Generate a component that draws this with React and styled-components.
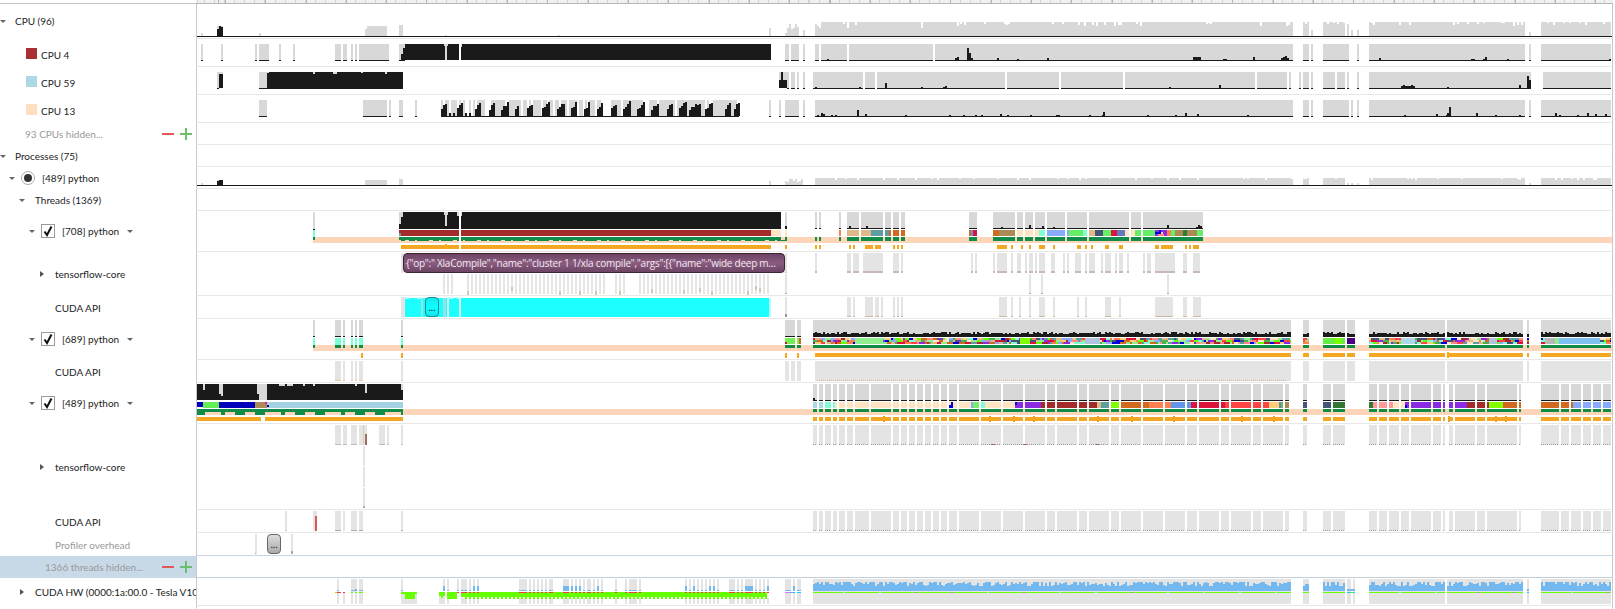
import React from "react";
import styled, { createGlobalStyle } from "styled-components";

const Global = createGlobalStyle`
  html, body { margin: 0; padding: 0; background: #fff; overflow: hidden; }
  #root { width: 1615px; height: 609px; overflow: hidden; }
`;

const GRAY = "#d8d8d8", LIGHT = "#e4e4e4", BLACK = "#1a1a1a", PEACH = "#fdd6b9", GREEN = "#118c48", ORANGE = "#fca912";

let seed = 12345;
const rnd = () => { seed = (seed * 1664525 + 1013904223) % 4294967296; return seed / 4294967296; };

const box = (x, y, w, h, c) => ({ x, y, w, h, c });
const fill = (list, y, h, c) => list.map(([a, b]) => box(a, y, b - a, h, c));
const jag = (list, base, hi, lo, c, chance = 0.35) => {
  const out = [];
  list.forEach(([a, b]) => {
    for (let x = a; x < b; x += 2) {
      const h = rnd() < chance ? lo + Math.floor(rnd() * (hi - lo)) : hi;
      out.push(box(x, base - h, Math.min(2, b - x), h, c));
    }
  });
  return out;
};
const bumps = (list, base) => list.map(([x, h, w = 2]) => box(x, base - h, w, h, BLACK));
const stripes = (list, y, h) => {
  const out = [];
  list.forEach(([a, b]) => {
    out.push(box(a, y, b - a, h, ORANGE));
    for (let x = a + 1; x < b; x += 2) out.push(box(x, y, 1, h, "#e9a633"));
  });
  return out;
};
const colored = (list, y, h) => list.map(([a, b, c]) => box(a, y, b - a, h, c));

const CPU4 = [[201, 203], [221, 223], [255, 257], [259, 269], [279, 281], [293, 295], [335, 341], [343, 347], [351, 353], [355, 357], [359, 389], [399, 405], [785, 789], [791, 799], [803, 805], [815, 819], [821, 847], [849, 933], [935, 1293], [1303, 1309], [1311, 1313], [1323, 1349], [1357, 1359], [1369, 1525], [1529, 1531], [1541, 1611]];
const CPU59 = [[217, 219], [259, 267], [787, 789], [791, 795], [797, 799], [803, 805], [813, 863], [865, 875], [877, 1005], [1007, 1059], [1061, 1123], [1125, 1255], [1257, 1287], [1289, 1291], [1299, 1301], [1303, 1309], [1311, 1313], [1323, 1335], [1337, 1345], [1347, 1349], [1357, 1359], [1369, 1531], [1543, 1611]];
const CPU13 = [[259, 267], [363, 387], [389, 391], [399, 403], [415, 417], [769, 771], [779, 781], [785, 799], [803, 805], [815, 1293], [1303, 1309], [1311, 1313], [1323, 1349], [1351, 1353], [1357, 1359], [1369, 1525], [1529, 1531], [1541, 1611]];

const S489 = [[813, 817], [819, 823], [825, 831], [833, 837], [839, 845], [847, 853], [855, 869], [871, 891], [893, 899], [901, 907], [909, 915], [917, 923], [925, 931], [933, 939], [941, 947], [949, 957], [959, 979], [981, 1001], [1003, 1023], [1025, 1045], [1047, 1055], [1057, 1077], [1079, 1087], [1089, 1109], [1111, 1119], [1121, 1141], [1143, 1163], [1165, 1185], [1187, 1197], [1199, 1219], [1221, 1229], [1231, 1251], [1253, 1261], [1263, 1283], [1285, 1289], [1303, 1307], [1323, 1331], [1333, 1345], [1369, 1377], [1379, 1387], [1389, 1399], [1401, 1409], [1411, 1431], [1433, 1441], [1443, 1445], [1449, 1453], [1455, 1475], [1477, 1485], [1487, 1517], [1519, 1521], [1541, 1559], [1561, 1569], [1571, 1581], [1583, 1591], [1593, 1601], [1603, 1611]];
const S689 = [[813, 1291], [1303, 1309], [1323, 1345], [1347, 1355], [1369, 1445], [1447, 1523], [1527, 1529], [1541, 1611]];
const E689 = [[313, 315], [335, 341], [343, 345], [351, 353], [355, 357], [359, 363], [401, 403]];
const S708 = [[785, 787], [815, 817], [819, 821], [839, 841], [847, 859], [861, 883], [885, 891], [893, 899], [901, 905], [969, 977], [993, 1015], [1017, 1023], [1025, 1033], [1035, 1045], [1047, 1065], [1067, 1087], [1089, 1129], [1131, 1141], [1143, 1203]];
const T708 = [[815, 817], [847, 851], [853, 859], [863, 883], [893, 899], [901, 903], [971, 973], [975, 977], [993, 995], [997, 1007], [1011, 1013], [1017, 1021], [1025, 1027], [1029, 1033], [1035, 1037], [1039, 1045], [1051, 1055], [1063, 1065], [1067, 1069], [1075, 1081], [1085, 1087], [1089, 1095], [1101, 1103], [1105, 1111], [1115, 1117], [1119, 1123], [1127, 1129], [1143, 1145], [1147, 1151], [1155, 1175], [1183, 1187], [1193, 1200]];
const C708 = [[785, 787], [847, 851], [853, 855], [865, 873], [875, 879], [881, 883], [893, 895], [897, 899], [901, 903], [999, 1007], [1011, 1013], [1019, 1021], [1029, 1031], [1039, 1045], [1053, 1055], [1077, 1079], [1085, 1087], [1105, 1111], [1119, 1121], [1155, 1173], [1183, 1187], [1193, 1201]];
const O708 = [[849, 851], [853, 855], [865, 873], [875, 881], [893, 895], [897, 899], [901, 903], [997, 1007], [1011, 1013], [1021, 1023], [1029, 1031], [1039, 1045], [1053, 1055], [1077, 1081], [1085, 1087], [1091, 1093], [1105, 1109], [1119, 1123], [1155, 1159], [1161, 1173], [1185, 1187], [1189, 1191], [1193, 1199]];

const PALETTE = ["#ff4444", "#0000dd", "#66ff00", "#d2691e", "#90ee90", "#ff8888", "#5f9ea0", "#dc143c", "#ffe4c4", "#8a2be2", "#deb887", "#88aaff", "#a52a2a", "#7fffd4", "#4caf50", "#ffcc77", "#445577", "#ff7f50"];
const mixStrip = (ranges, y) => {
  const out = [];
  ranges.forEach(([a, b]) => {
    [y, y + 2, y + 4].forEach((ry) => {
      let x = a;
      while (x < b) {
        const w = Math.min(2 + 2 * Math.floor(rnd() * 3), b - x);
        out.push(box(x, ry, w, 2, PALETTE[Math.floor(rnd() * PALETTE.length)]));
        x += w;
      }
    });
  });
  return out;
};

const comb = () => {
  const blacks = [[441, 447], [457, 463], [475, 481], [489, 495], [501, 509], [515, 519], [527, 533], [542, 549], [557, 564], [571, 577], [584, 590], [597, 603], [611, 617], [623, 630], [637, 645], [651, 659], [667, 673], [679, 686], [689, 701], [705, 712], [725, 730], [734, 739]];
  const out = [];
  for (let x = 441; x < 739; x += 2) {
    if ((x > 603 && x < 611) || rnd() < 0.2) continue;
    out.push(box(x, 100, 2, 16, GRAY));
  }
  blacks.forEach(([a, b]) => {
    for (let x = a; x < b; x += 2) {
      const t = (x - a) / (b - a);
      const top = 100 + Math.floor(rnd() * 3 + (1 - t) * 8);
      out.push(box(x, top, 2, 116 - top, BLACK));
    }
  });
  out.push(...[[449, 451], [453, 455], [465, 467], [469, 471]].map(([a, b]) => box(a, 113, b - a, 3, BLACK)));
  return out;
};

const row1 = [
  ...fill([[201, 203]], 33, 3, GRAY),
  ...fill([[217, 223]], 26, 10, GRAY),
  ...bumps([[217, 7], [219, 10], [221, 9]], 36),
  ...fill([[259, 261]], 33, 3, GRAY),
  ...fill([[365, 367]], 29, 7, GRAY),
  ...fill([[367, 387]], 26, 10, GRAY),
  ...fill([[399, 403]], 25, 11, GRAY),
  ...fill([[445, 447], [558, 560]], 35, 1, GRAY),
  ...fill([[769, 771]], 28, 8, GRAY),
  ...jag([[785, 799]], 36, 12, 3, GRAY, 0.7),
  ...fill([[803, 805]], 30, 6, GRAY),
  ...jag([[815, 821]], 36, 12, 7, GRAY, 0.6),
  ...jag([[821, 960]], 36, 14, 4, GRAY, 0.14),
  ...jag([[960, 1293]], 36, 14, 10, GRAY, 0.14),
  ...jag([[1303, 1309]], 36, 14, 6, GRAY, 0.4),
  ...fill([[1311, 1313]], 30, 6, GRAY),
  ...jag([[1323, 1345]], 36, 14, 11, GRAY, 0.3),
  ...fill([[1347, 1349]], 24, 12, GRAY),
  ...fill([[1351, 1353], [1357, 1359]], 30, 6, GRAY),
  ...jag([[1369, 1525]], 36, 14, 9, GRAY, 0.14),
  ...fill([[1529, 1531]], 32, 4, GRAY),
  ...jag([[1541, 1611]], 36, 14, 11, GRAY, 0.2),
  box(197, 36, 1415, 1, BLACK),
];

const pythonTop = [
  ...fill([[201, 203]], 183, 2, GRAY),
  ...fill([[217, 223]], 180, 5, GRAY),
  ...bumps([[217, 4], [219, 5], [221, 5]], 185),
  ...fill([[365, 387]], 180, 5, GRAY),
  ...fill([[399, 403]], 179, 6, GRAY),
  ...fill([[769, 771]], 181, 4, GRAY),
  ...jag([[785, 803]], 185, 6, 2, GRAY, 0.6),
  ...jag([[815, 1293], [1303, 1309], [1323, 1345], [1369, 1525], [1541, 1611]], 185, 7, 5, GRAY, 0.14),
  ...fill([[1347, 1349], [1351, 1353], [1357, 1359], [1529, 1531]], 183, 2, GRAY),
  box(197, 185, 1415, 1, BLACK),
];

const cpu4 = [
  ...fill(CPU4, 44, 16, GRAY),
  box(405, 44, 366, 16, BLACK),
  box(403, 48, 2, 12, BLACK), box(401, 54, 2, 6, BLACK),
  box(445, 44, 2, 16, GRAY), box(444, 44, 4, 2, GRAY),
  box(459, 44, 2, 16, "#fff"), box(461, 44, 1, 3, GRAY),
  ...bumps([[827, 1], [955, 2], [957, 3], [967, 12], [969, 7], [971, 2], [997, 2], [1017, 1], [1047, 2], [1193, 3, 8], [1223, 1, 4], [1253, 3], [1281, 2, 2], [1283, 3, 2], [1285, 4, 2], [1287, 2, 2], [1379, 2], [1471, 1, 4], [1483, 1, 2], [1485, 3, 2], [1507, 1], [1609, 1]], 60),
  ...fill(CPU4, 60, 1, BLACK),
];

const cpu59 = [
  ...fill(CPU59, 72, 16, GRAY),
  box(267, 72, 136, 16, GRAY),
  ...jag([[267, 403]], 88, 16, 14, BLACK, 0.14),
  box(219, 72, 4, 16, GRAY), box(219, 74, 4, 14, BLACK),
  box(779, 72, 8, 16, BLACK), box(779, 72, 2, 8, GRAY), box(783, 72, 4, 8, GRAY),
  ...bumps([[815, 1], [859, 1], [885, 5], [921, 1], [943, 1], [945, 2], [1169, 1], [1219, 3], [1401, 2, 2], [1403, 3, 2], [1405, 2, 6], [1411, 3, 2], [1413, 2, 2], [1447, 1], [1519, 3], [1527, 12, 2], [1529, 8, 2]], 88),
  ...fill(CPU59, 88, 1, BLACK),
  box(267, 88, 136, 1, BLACK),
];

const cpu13 = [
  ...fill(CPU13, 100, 16, GRAY),
  ...comb(),
  ...bumps([[817, 1], [821, 3], [823, 2], [831, 1], [835, 1], [857, 6], [865, 2], [905, 1], [949, 1], [963, 1], [975, 1], [981, 1], [1000, 2], [1007, 1], [1030, 1], [1056, 1, 4], [1089, 1], [1103, 1], [1102, 1], [1103, 4], [1147, 1], [1175, 1], [1185, 3], [1197, 2], [1247, 1], [1404, 1], [1436, 2], [1446, 1], [1447, 3], [1449, 9], [1476, 3], [1495, 1], [1519, 1], [1555, 3], [1559, 1], [1577, 1], [1587, 3], [1595, 2], [1605, 2]], 116),
  ...fill(CPU13, 116, 1, BLACK),
  ...fill([[441, 739]], 116, 1, BLACK),
];

const strip708 = [
  [839, 841, "#ff7f50"], [847, 859, "#deb887"], [861, 871, "#deb887"], [871, 883, "#5f9ea0"], [885, 889, "#5f9ea0"], [889, 891, "#d2691e"], [893, 899, "#d2691e"], [901, 905, "#d2691e"], [969, 971, "#d2691e"], [971, 973, "#6495ed"], [973, 977, "#dc143c"], [993, 999, "#d2691e"], [999, 1015, "#ab8a55"], [1017, 1023, "#ffe4c4"], [1025, 1033, "#ffe4c4"], [1035, 1039, "#ffe4c4"], [1039, 1045, "#7fffd4"], [1047, 1049, "#88aaff"], [1049, 1065, "#88aaff"], [1067, 1069, "#88aaff"], [1069, 1083, "#66ee66"], [1083, 1087, "#7fffd4"], [1089, 1095, "#deb887"], [1095, 1103, "#445577"], [1103, 1111, "#66ee66"], [1111, 1117, "#dc143c"], [1117, 1125, "#6677bb"], [1125, 1129, "#ffe4c4"], [1131, 1135, "#ffe4c4"], [1135, 1141, "#66ee66"], [1143, 1155, "#66ee66"], [1155, 1167, "#8a2be2"], [1167, 1171, "#ff7f50"], [1171, 1175, "#66ee66"], [1175, 1183, "#ab8a55"], [1183, 1187, "#2e7d32"], [1187, 1197, "#ab8a55"], [1197, 1203, "#66ee66"],
];

const row708 = [
  box(313, 237, 1299, 6, PEACH),
  box(313, 212, 2, 17, GRAY), box(313, 229, 2, 1, BLACK), box(313, 230, 2, 7, "#7fffd4"), box(313, 237, 2, 3, GREEN),
  box(399, 212, 382, 17, BLACK), box(399, 212, 2, 12, GRAY), box(401, 212, 2, 5, GRAY),
  ...fill([[445, 447]], 212, 14, GRAY), box(444, 212, 4, 3, GRAY),
  box(459, 212, 2, 31, "#fff"), box(457, 212, 2, 4, GRAY), box(461, 212, 1, 4, GRAY),
  box(399, 230, 372, 6, "#a52a2a"), box(771, 230, 10, 6, "#ffe4c4"), box(459, 230, 2, 6, "#fff"), box(399, 233, 2, 3, "#5f9ea0"),
  box(399, 237, 382, 3, GREEN),
  ...Array.from({ length: 48 }, (_, i) => box(401 + i * 8, 240, 4 + (i % 3) * 2, 1, GREEN)),
  box(459, 237, 2, 6, "#fff"),
  ...stripes([[401, 459], [461, 771]], 245, 4), box(445, 244, 2, 5, ORANGE),
  box(785, 212, 2, 17, GRAY), box(785, 226, 2, 3, BLACK), box(785, 230, 2, 7, "#ffe4c4"),
  ...fill(S708.slice(1), 212, 16, GRAY),
  ...fill(S708, 237, 4, GREEN),
  ...fill(S708.slice(1), 228, 1, BLACK),
  ...bumps([[849, 2], [866, 2], [1001, 1, 2], [1029, 3], [1042, 2], [1053, 1], [1167, 3], [1196, 1], [1198, 3, 2], [1200, 2]], 228),
  ...colored(strip708, 230, 6),
  box(1155, 232, 6, 2, "#0000dd"), box(1159, 230, 2, 3, "#0000dd"), box(1158, 234, 6, 2, "#ff8888"), box(1161, 232, 2, 2, "#ffcc77"),
  ...stripes([[785, 787], [815, 817], [819, 821]], 245, 4),
  ...stripes(O708, 245, 4),
];

const thinBars = () => {
  const out = [];
  for (let x = 443; x < 770; x += 4) {
    if ((x > 451 && x < 467) || (x > 604 && x < 615) || (x > 626 && x < 636)) continue;
    out.push(box(x, 274, 2, 20, "#e6e6e6"));
    if (rnd() < 0.22) out.push(box(x, 291 - Math.floor(rnd() * 6), 2, 4, "#d0c8b4"));
    else out.push(box(x, 293, 2, 1, "#eadfc8"));
  }
  return out;
};

const tf708 = [
  box(401, 253, 2, 20, LIGHT),
  ...fill(T708, 253, 20, LIGHT),
  ...fill([[785, 787]], 253, 20, LIGHT),
  ...fill(T708, 271, 2, "#c8b8bc"),
  ...fill([[785, 787]], 272, 1, "#f3b6c0"),
  ...thinBars(),
  ...fill([[785, 787], [1029, 1031], [1041, 1043], [1167, 1169]], 274, 20, LIGHT),
  ...fill([[785, 787], [1029, 1031], [1041, 1043], [1167, 1169]], 293, 1, "#aaa"),
];

const cuda708 = [
  box(401, 297, 4, 20, LIGHT),
  box(405, 298, 364, 19, "#1dffff"),
  box(769, 298, 2, 19, "#b4ffff"),
  ...fill([[421, 423], [443, 446]], 298, 19, "#8de6e6"),
  ...fill([[447, 449]], 298, 19, "#e0fafa"),
  ...fill([[459, 461]], 297, 20, "#d6ffff"),
  ...fill([[405, 409], [417, 421], [447, 453], [457, 459]], 297, 2, "#bdffff"),
  ...fill(C708, 297, 20, LIGHT),
  ...fill(C708, 316, 1, "#c9b89c"),
  box(785, 314, 2, 3, "#999"),
];

const solid489 = [
  [813, 817, "#add8e6"], [819, 823, "#add8e6"], [825, 831, "#7fffd4"], [833, 835, "#7fffd4"], [835, 837, "#ffe4c4"], [839, 845, "#ffe4c4"], [847, 853, "#ffe4c4"], [855, 869, "#ffe4c4"], [871, 891, "#ffe4c4"], [893, 899, "#ffe4c4"], [901, 907, "#ffe4c4"], [909, 915, "#ffe4c4"], [917, 923, "#ffe4c4"], [925, 931, "#ffe4c4"], [933, 939, "#ffe4c4"], [941, 947, "#ffe4c4"], [949, 957, "#ffe4c4"], [959, 971, "#ffe4c4"], [971, 973, "#88aaff"], [973, 979, "#77ee66"], [981, 985, "#7fffd4"], [985, 1001, "#ffe4c4"], [1003, 1015, "#ffe4c4"], [1015, 1023, "#8a2be2"], [1025, 1041, "#8a2be2"], [1041, 1045, "#a52a2a"], [1047, 1055, "#a52a2a"], [1057, 1077, "#a52a2a"], [1079, 1087, "#a52a2a"], [1089, 1097, "#a52a2a"], [1097, 1101, "#deb887"], [1101, 1109, "#5f9ea0"], [1111, 1119, "#7fff00"], [1121, 1141, "#d2691e"], [1143, 1149, "#d2691e"], [1149, 1163, "#ff7f50"], [1165, 1171, "#ff7f50"], [1171, 1185, "#6495ed"], [1187, 1191, "#6495ed"], [1191, 1197, "#dc143c"], [1199, 1219, "#dc143c"], [1221, 1225, "#dc143c"], [1225, 1229, "#ff4444"], [1231, 1251, "#ff4444"], [1253, 1261, "#ff4444"], [1263, 1269, "#ff4444"], [1269, 1279, "#ffcc77"], [1279, 1281, "#6688aa"], [1281, 1283, "#66bb66"], [1285, 1289, "#ab8a55"], [1303, 1307, "#445577"], [1323, 1331, "#445577"], [1333, 1345, "#337733"], [1369, 1373, "#337733"], [1373, 1377, "#ff9999"], [1379, 1387, "#ff9999"], [1389, 1393, "#ff9999"], [1393, 1399, "#ffe4c4"], [1401, 1405, "#ffe4c4"], [1405, 1409, "#8a2be2"], [1411, 1431, "#8a2be2"], [1433, 1441, "#8a2be2"], [1443, 1445, "#8a2be2"], [1449, 1453, "#8a2be2"], [1455, 1467, "#8a2be2"], [1467, 1475, "#a52a2a"], [1477, 1485, "#a52a2a"], [1487, 1489, "#a52a2a"], [1489, 1503, "#7fff00"], [1503, 1517, "#d2691e"], [1519, 1521, "#d2691e"], [1541, 1559, "#d2691e"], [1561, 1569, "#d2691e"], [1571, 1573, "#d2691e"], [1573, 1581, "#88aaff"], [1583, 1591, "#88aaff"], [1593, 1601, "#88aaff"], [1603, 1611, "#88aaff"],
];

const row489 = [
  box(197, 409, 1415, 6, PEACH),
  box(197, 384, 206, 16, BLACK),
  box(203, 384, 2, 6, GRAY), box(219, 384, 4, 10, GRAY), box(221, 384, 2, 12, GRAY),
  box(259, 384, 8, 16, GRAY), box(257, 384, 2, 10, GRAY),
  ...fill([[279, 285], [287, 293], [303, 305], [313, 315], [355, 357], [365, 367]], 384, 2, GRAY),
  box(365, 384, 2, 9, GRAY), box(401, 384, 2, 6, GRAY),
  box(197, 402, 6, 5, "#0000bb"), box(203, 402, 16, 6, "#66ee55"), box(219, 402, 36, 6, "#0000bb"),
  box(255, 402, 12, 6, "#ab8a55"), box(267, 402, 136, 6, "#a5d2e3"), box(265, 402, 2, 2, "#ff00aa"), box(267, 405, 2, 2, "#0000bb"),
  box(197, 409, 206, 6, GREEN),
  ...Array.from({ length: 10 }, (_, i) => box(205 + i * 20, 412, i % 3 === 0 ? 16 : 10, 3, PEACH)),
  ...stripes([[197, 261], [265, 403]], 417, 4),
  ...fill(S489, 384, 16, GRAY),
  ...fill(S489, 400, 1, BLACK),
  box(813, 398, 2, 2, BLACK),
  ...colored(solid489, 402, 6),
  box(949, 405, 4, 3, "#0000dd"), box(951, 402, 2, 3, "#0000dd"), box(1015, 402, 2, 3, "#0000dd"), box(1405, 405, 2, 3, "#0000dd"),
  ...fill(S489, 409, 3, GREEN),
  ...stripes(S489, 417, 4),
  ...fill([[883, 885], [989, 991], [1013, 1015], [1033, 1035], [1097, 1099], [1131, 1133], [1173, 1175], [1241, 1243], [1273, 1275], [1448, 1450], [1495, 1497], [1505, 1507]], 416, 6, "#f0a22a"),
];

const row689 = [
  box(313, 345, 1299, 6, PEACH),
  ...fill(E689, 320, 16, GRAY),
  ...fill(E689, 336, 1, BLACK),
  ...fill(E689, 338, 7, "#7fffd4"),
  ...fill(E689, 345, 3, GREEN),
  ...stripes([[361, 363], [401, 403], [785, 787], [797, 799]], 353, 5),
  ...fill([[785, 795], [797, 801]], 320, 16, GRAY),
  ...fill([[785, 795], [797, 801]], 336, 1, BLACK),
  box(785, 338, 10, 6, "#77ee55"), box(785, 342, 2, 2, "#dc143c"), box(797, 338, 2, 6, "#77ee55"), box(799, 338, 2, 6, "#d2691e"),
  ...fill([[785, 795], [797, 801]], 345, 3, GREEN),
  ...fill(S689, 320, 14, GRAY),
  ...mixStrip([[813, 855], [883, 1020], [1030, 1085], [1100, 1291], [1369, 1401], [1415, 1489], [1497, 1523], [1527, 1529], [1541, 1545], [1600, 1611], [1303, 1309]], 338),
  box(855, 338, 28, 6, "#90ee90"), box(1020, 338, 10, 6, "#7fff00"), box(1085, 338, 15, 6, "#b0c4de"),
  box(1323, 338, 22, 6, "#66ee44"), box(1335, 338, 6, 6, "#7fff00"), box(1347, 338, 8, 6, "#4b0082"),
  box(1401, 338, 14, 6, "#add8e6"), box(1489, 338, 8, 6, "#b0c4de"),
  box(1545, 338, 10, 6, "#b8b8b8"), box(1555, 338, 4, 6, "#90ee90"), box(1559, 338, 41, 6, "#7ec0f0"),
  ...fill(S689, 334, 3, BLACK),
  ...jag(S689, 334, 2, 0, BLACK, 0.75),
  ...fill(S689, 345, 3, GREEN),
  ...stripes(S689.map(([a, b]) => [a === 813 ? 815 : a, b]), 353, 4),
  box(1447, 352, 2, 6, ORANGE),
];

const cuda689 = [
  ...fill(E689.slice(1, 6).concat([[401, 403], [785, 789], [791, 795], [797, 801]]), 361, 20, LIGHT),
  ...fill(S689.map(([a, b]) => [a === 813 ? 815 : a, b]), 361, 20, LIGHT),
  ...fill(E689.slice(1), 380, 1, "#e8c89a"),
  ...Array.from({ length: 235 }, (_, i) => box(817 + i * 2, 380, 1, 1, "#cfb28a")),
];

const tf489 = [
  ...fill([[335, 341], [343, 347], [351, 357], [359, 367], [379, 385], [387, 389], [401, 403]], 425, 20, LIGHT),
  box(363, 425, 1, 20, "#d8d0b0"), box(365, 434, 2, 11, "#9a6f60"),
  ...fill([[335, 341], [343, 347], [351, 357], [379, 385], [387, 389], [401, 403]], 444, 1, "#bbb"),
  box(363, 446, 2, 20, LIGHT), box(363, 467, 2, 20, LIGHT), box(363, 488, 2, 19, LIGHT), box(363, 506, 2, 2, "#aab"),
  ...fill(S489, 425, 20, LIGHT),
  ...S489.flatMap(([a, b]) => {
    const out = [];
    for (let x = a; x < b; x += 2) out.push(box(x, 444, 1, 1, "#999"));
    return out;
  }),
  ...fill([[1023, 1027], [991, 995], [1096, 1099]], 444, 1, "#a06070"),
];

const cuda489 = [
  ...fill([[285, 287], [335, 341], [343, 345], [351, 357], [359, 363], [401, 403]], 511, 20, LIGHT),
  box(315, 511, 2, 20, LIGHT), box(313, 511, 2, 20, LIGHT), box(315, 516, 2, 15, "#d65a5a"),
  ...fill([[285, 287]], 530, 1, "#f0c090"), ...fill([[335, 341], [351, 357], [359, 363], [401, 403]], 530, 1, "#aaa"),
  ...fill(S489, 511, 20, LIGHT),
  ...S489.flatMap(([a, b]) => {
    const out = [];
    for (let x = a; x < b; x += 2) out.push(box(x, 530, 1, 1, "#a0a0a0"));
    return out;
  }),
];

const profiler = [
  box(255, 534, 2, 20, LIGHT), box(291, 534, 2, 20, LIGHT),
  box(255, 553, 1, 1, "#aaa"), box(291, 551, 2, 3, "#aaa"),
];

const hwBars = [[443, 445], [447, 449], [457, 459], [461, 467], [469, 471], [473, 475], [477, 479], [519, 527], [529, 531], [533, 535], [537, 539], [541, 543], [545, 547], [549, 553], [563, 569], [571, 573], [575, 577], [579, 581], [583, 585], [587, 591], [593, 595], [597, 599], [601, 603], [615, 617], [625, 627], [629, 637], [639, 641], [685, 687], [689, 691], [693, 695], [697, 699], [701, 703], [705, 707], [709, 711], [713, 715], [717, 719], [729, 735], [737, 739], [741, 743], [745, 753], [755, 757], [759, 761], [763, 765], [767, 769], [785, 791], [793, 795], [797, 801]];
const hw = [
  ...fill([[337, 339], [351, 357], [359, 363], [401, 403]], 579, 13, LIGHT),
  ...fill([[337, 339], [343, 345], [351, 353], [355, 357], [359, 363], [401, 417], [439, 445]], 593, 11, LIGHT),
  box(337, 590, 2, 1, "#74b8f0"), box(351, 590, 4, 1, "#74b8f0"), box(355, 589, 2, 2, "#74b8f0"), box(359, 590, 4, 1, "#74b8f0"), box(401, 590, 2, 1, "#74b8f0"),
  box(335, 592, 2, 1, "#66ff00"), box(337, 592, 4, 1, "#ff3355"), box(343, 592, 2, 1, "#ff3355"), box(351, 592, 2, 1, "#66ff00"), box(355, 592, 2, 1, "#66ff00"), box(359, 592, 4, 1, "#66ff00"),
  ...fill([[443, 445], [447, 449], [461, 463]], 594, 10, LIGHT),
  ...fill(hwBars.slice(3), 598, 6, LIGHT),
  ...fill(hwBars, 579, 12, LIGHT),
  ...hwBars.map(([a, b]) => {
    const h = rnd() < 0.25 ? 5 : 1;
    return box(a, 591 - h, b - a, h, "#74b8f0");
  }),
  box(401, 592, 16, 2, "#66ff00"), box(405, 592, 10, 7, "#66ff00"),
  box(439, 592, 6, 4, "#66ff00"), box(441, 596, 2, 2, "#66ff00"),
  box(447, 592, 10, 7, "#66ff00"), box(457, 592, 2, 1, "#ff3355"),
  box(461, 592, 306, 5, "#66ff00"),
  ...Array.from({ length: 76 }, (_, i) => box(465 + i * 4, 597, 2, 2, "#66ff00")),
  ...fill(hwBars.slice(3).filter(([a]) => a < 770), 592, 1, "#ff3355"),
  ...fill([[785, 791], [793, 795], [797, 801]], 593, 11, LIGHT),
  box(785, 592, 6, 1, "#e070f0"), box(791, 592, 4, 1, "#19c8ff"), box(797, 592, 4, 1, "#19c8ff"),
  ...fill(S689.map(([a, b]) => (a === 1347 ? [1347, 1351] : [a, b])).concat([[1353, 1355]]), 579, 25, LIGHT),
  ...jag(S689.filter(([a]) => a !== 1347 && a !== 1527), 591, 9, 5, "#74b8f0", 0.6),
  box(1347, 589, 8, 2, "#74b8f0"), box(1527, 589, 2, 2, "#74b8f0"),
  ...S689.flatMap(([a, b]) => {
    const out = [box(a, 592, b - a, 1, "#66ff00")];
    for (let x = a + 30; x < b; x += 36) out.push(box(x, 592, 2, 1, rnd() < 0.2 ? "#e070f0" : "#b5ddf5"));
    return out;
  }),
  box(1347, 592, 4, 1, "#19c8ff"), box(1353, 592, 2, 1, "#19c8ff"), box(1527, 592, 2, 1, "#19c8ff"),
];

const Page = styled.div`
  width: 1615px;
  height: 609px;
  font-family: Lato, "Open Sans", sans-serif;
  font-size: 10px;
  color: #222;
  display: flex;
  flex-direction: column;
`;
const Ruler = styled.div`
  display: flex;
  height: 4px;
  flex: none;
`;
const RulerSide = styled.div`
  width: 196px;
  flex: none;
  box-sizing: border-box;
  border-bottom: 1px solid #c4c4c4;
`;
const RulerScale = styled.div`
  width: 1417px;
  box-sizing: border-box;
  border-bottom: 1px solid #b8b8b8;
  background-color: #f0f0f0;
  background-image:
    repeating-linear-gradient(to right, #b4b4b4 0 1px, transparent 1px 40.3px),
    repeating-linear-gradient(to right, #d4d4d4 0 1px, transparent 1px 10.075px);
  background-position: 29px 0, 8px 0;
`;
const Row = styled.div`
  display: flex;
  height: ${(p) => p.$h}px;
  flex: none;
`;
const Label = styled.div`
  width: 196px;
  flex: none;
  box-sizing: border-box;
  padding-left: ${(p) => p.$indent}px;
  padding-top: ${(p) => p.$down || 0}px;
  padding-bottom: ${(p) => p.$up || 0}px;
  display: flex;
  align-items: center;
  white-space: nowrap;
  overflow: hidden;
  color: ${(p) => (p.$muted ? "#999" : "#222")};
  background: ${(p) => (p.$selected ? "#c8d9e8" : "transparent")};
`;
const Track = styled.div`
  position: relative;
  width: 1417px;
  flex: none;
  box-sizing: border-box;
  border-left: 1px solid #c8c8c8;
  border-right: 1px solid #c8c8c8;
  border-bottom: 1px solid ${(p) => p.$line || "#e8e8e8"};
`;
const Chart = styled.svg`
  display: block;
  width: 100%;
  height: 100%;
`;
const Caret = styled.span`
  flex: none;
  width: 0;
  height: 0;
  border-left: 3px solid transparent;
  border-right: 3px solid transparent;
  border-top: 3.5px solid #666;
  margin-right: ${(p) => p.$gap}px;
`;
const SideCaret = styled.span`
  flex: none;
  width: 0;
  height: 0;
  border-top: 3.5px solid transparent;
  border-bottom: 3.5px solid transparent;
  border-left: 4px solid #555;
  margin-right: ${(p) => p.$gap}px;
`;
const Swatch = styled.span`
  flex: none;
  width: 11px;
  height: 11px;
  margin-right: 4px;
  margin-top: -3px;
  background: ${(p) => p.$color};
`;
const CheckBox = styled.span`
  flex: none;
  width: 14px;
  height: 14px;
  box-sizing: border-box;
  border: 1px solid #999;
  background: #fff;
  display: flex;
  align-items: center;
  justify-content: center;
  margin-right: 7px;
`;
const Radio = styled.span`
  flex: none;
  width: 14px;
  height: 14px;
  box-sizing: border-box;
  border-radius: 50%;
  border: 1px solid #aaa;
  display: flex;
  align-items: center;
  justify-content: center;
  margin-right: 7px;
  &::after {
    content: "";
    width: 8px;
    height: 8px;
    border-radius: 50%;
    background: #333;
  }
`;
const Name = styled.span`
  flex: ${(p) => (p.$grow ? 1 : "none")};
  margin-right: ${(p) => p.$gap || 0}px;
  margin-top: ${(p) => p.$shift || 0}px;
`;
const Controls = styled.span`
  display: flex;
  gap: 6px;
  margin-right: 4px;
  align-items: center;
`;
const Slice = styled.div`
  position: absolute;
  box-sizing: border-box;
  left: ${(p) => p.$left}px;
  top: 1px;
  width: ${(p) => p.$width}px;
  height: 20px;
  border-radius: 4px;
  display: flex;
  align-items: center;
  justify-content: center;
  white-space: pre;
  overflow: hidden;
`;
const TitleSlice = styled(Slice)`
  justify-content: flex-start;
  padding-left: 2px;
  border: 1px solid #3d2238;
  color: #f2e9f0;
  font-family: "Open Sans", sans-serif;
  font-size: 10px;
  letter-spacing: -0.25px;
  background: linear-gradient(#6c4463, #8b5b80 50%, #6c4463);
`;
const CyanChip = styled(Slice)`
  border: 1px solid #1f8c94;
  background: linear-gradient(#12e6ea, #1ff, #12e6ea);
  color: #123;
`;
const GrayChip = styled(Slice)`
  border: 1px solid #666;
  background: linear-gradient(#ddd, #aaa);
  color: #222;
`;

const Drawing = ({ top, h, rects }) => (
  <Chart viewBox={`197 ${top} 1415 ${h}`} preserveAspectRatio="none" shapeRendering="crispEdges">
    {rects.map((r, i) => (
      <rect key={i} x={r.x} y={r.y} width={r.w} height={r.h} fill={r.c} />
    ))}
  </Chart>
);

const Tick = () => (
  <svg width="12" height="12" viewBox="0 0 12 12">
    <path d="M2.5 6.5 L5 10 L9.5 1.5" fill="none" stroke="#111" strokeWidth="2" />
  </svg>
);
const HiddenControls = () => (
  <Controls>
    <svg width="12" height="12" viewBox="0 0 12 12" shapeRendering="crispEdges"><rect x="0" y="5" width="12" height="2" fill="#e0575c" /></svg>
    <svg width="12" height="12" viewBox="0 0 12 12" shapeRendering="crispEdges"><path d="M5 0h2v5h5v2H7v5H5V7H0V5h5z" fill="#6cbd6c" /></svg>
  </Controls>
);
const ThreadLabel = ({ name }) => (
  <Label $indent={29} $up={1}>
    <Caret $gap={6} />
    <CheckBox><Tick /></CheckBox>
    <Name $gap={8}>{name}</Name>
    <Caret $gap={0} />
  </Label>
);

const Line = ({ top, h, rects, label, line, children }) => (
  <Row $h={h}>
    {label}
    <Track $line={line}>
      <Drawing top={top} h={h - 1} rects={rects} />
      {children}
    </Track>
  </Row>
);

export default function App() {
  return (
    <Page>
      <Global />
      <Ruler><RulerSide /><RulerScale /></Ruler>
      <Line top={4} h={35} rects={row1} label={<Label $indent={0}><Caret $gap={9} /><Name $shift={-2}>CPU (96)</Name></Label>} />
      <Line top={39} h={28} rects={cpu4} label={<Label $indent={26} $down={3}><Swatch $color="#a92f35" /><Name>CPU 4</Name></Label>} />
      <Line top={67} h={28} rects={cpu59} label={<Label $indent={26} $down={3}><Swatch $color="#add8e6" /><Name>CPU 59</Name></Label>} />
      <Line top={95} h={28} rects={cpu13} label={<Label $indent={26} $down={3}><Swatch $color="#ffdfc2" /><Name>CPU 13</Name></Label>} />
      <Line top={123} h={22} rects={[]} label={<Label $indent={25} $muted><Name $grow>93 CPUs hidden...</Name><HiddenControls /></Label>} />
      <Line top={145} h={22} rects={[]} label={<Label $indent={0}><Caret $gap={9} /><Name>Processes (75)</Name></Label>} />
      <Line top={167} h={22} rects={pythonTop} label={<Label $indent={9}><Caret $gap={6} /><Radio /><Name>[489] python</Name></Label>} />
      <Line top={189} h={22} rects={[]} label={<Label $indent={19}><Caret $gap={10} /><Name>Threads (1369)</Name></Label>} />
      <Line top={211} h={41} rects={row708} label={<ThreadLabel name="[708] python" />} />
      <Line top={252} h={44} rects={tf708} label={<Label $indent={40}><SideCaret $gap={11} /><Name>tensorflow-core</Name></Label>}>
        <TitleSlice $left={206} $width={382}>{'{"op":" XlaCompile","name":"cluster 1 1/xla compile","args":[{"name":"wide deep m...'}</TitleSlice>
      </Line>
      <Line top={296} h={23} rects={cuda708} label={<Label $indent={55}><Name>CUDA API</Name></Label>}>
        <CyanChip $left={228} $width={14}>...</CyanChip>
      </Line>
      <Line top={319} h={41} rects={row689} label={<ThreadLabel name="[689] python" />} />
      <Line top={360} h={23} rects={cuda689} label={<Label $indent={55}><Name>CUDA API</Name></Label>} />
      <Line top={383} h={41} rects={row489} label={<ThreadLabel name="[489] python" />} />
      <Line top={424} h={86} rects={tf489} label={<Label $indent={40}><SideCaret $gap={11} /><Name>tensorflow-core</Name></Label>} />
      <Line top={510} h={23} rects={cuda489} label={<Label $indent={55}><Name>CUDA API</Name></Label>} />
      <Line top={533} h={23} rects={profiler} line="#c8d6e4" label={<Label $indent={55} $muted><Name>Profiler overhead</Name></Label>}>
        <GrayChip $left={70} $width={14}>...</GrayChip>
      </Line>
      <Line top={556} h={22} rects={[]} line="#c4ced6" label={<Label $indent={45} $muted $selected><Name $grow>1366 threads hidden...</Name><HiddenControls /></Label>} />
      <Line top={578} h={28} rects={hw} label={<Label $indent={20}><SideCaret $gap={11} /><Name>CUDA HW (0000:1a:00.0 - Tesla V100-SXM2-16GB)</Name></Label>} />
      <Row $h={3}><Label $indent={0} /><Track $line="transparent" /></Row>
    </Page>
  );
}
